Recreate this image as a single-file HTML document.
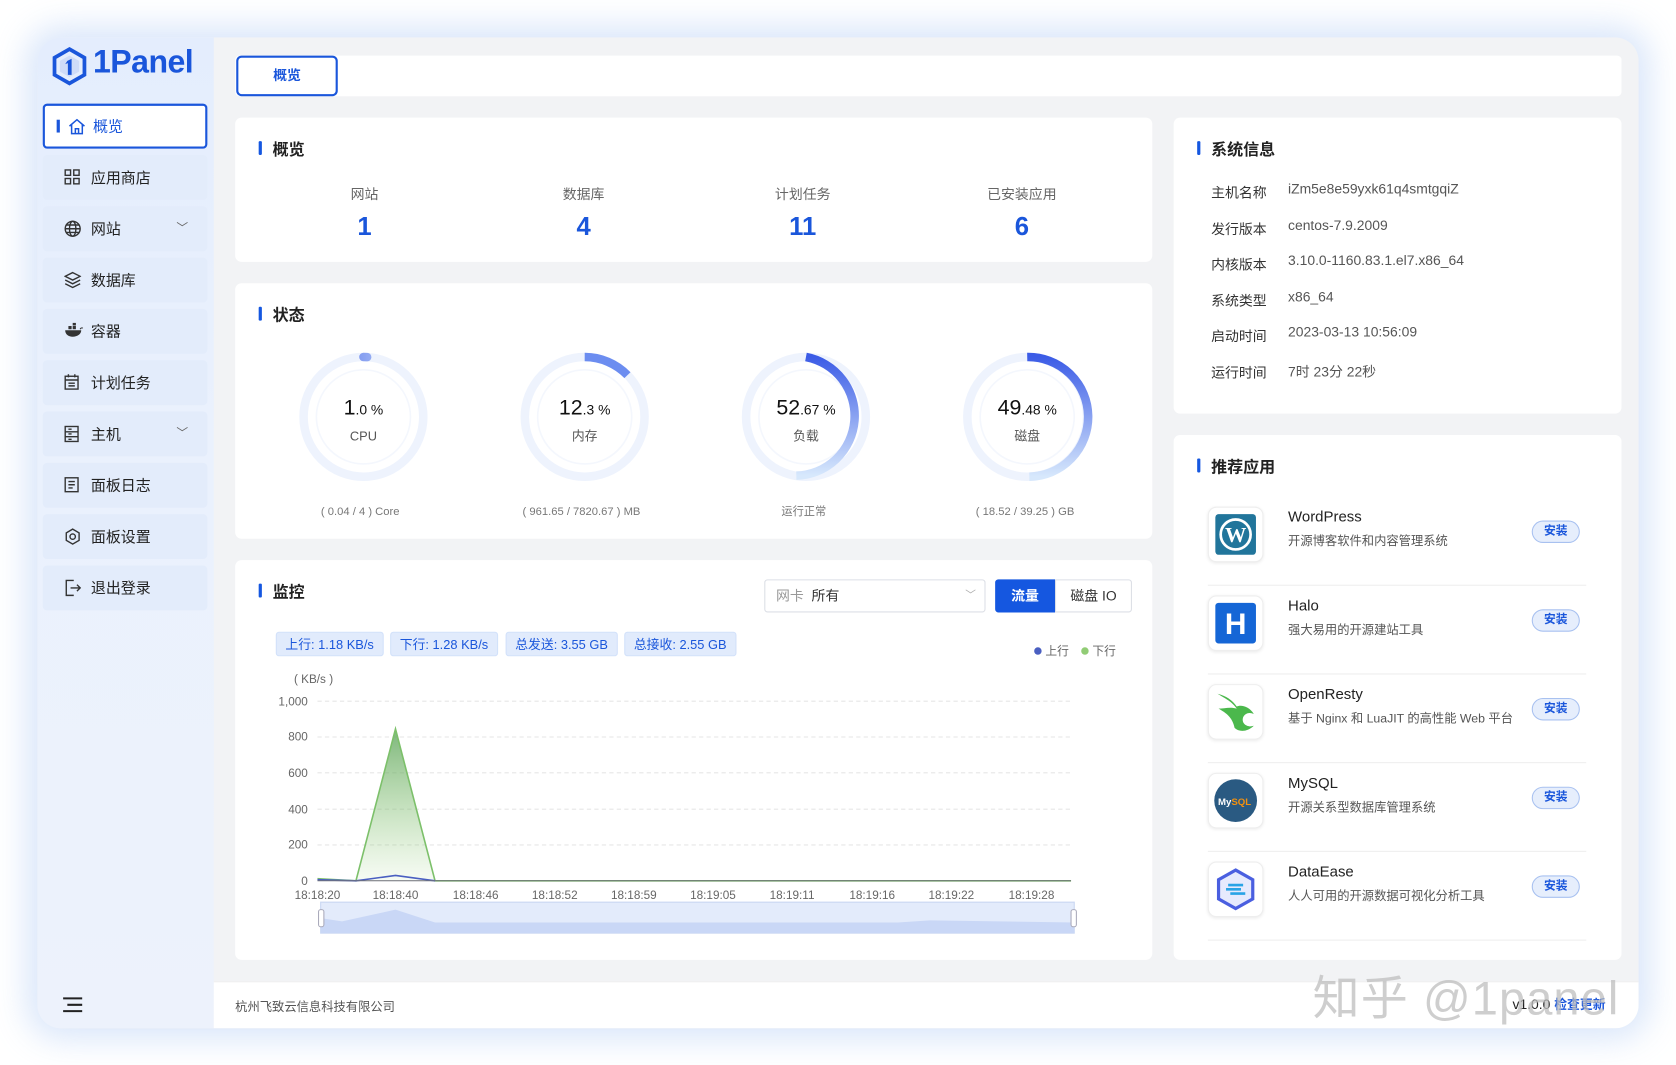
<!DOCTYPE html>
<html><head><meta charset="utf-8">
<style>
*{box-sizing:border-box;margin:0;padding:0}
html,body{width:1676px;height:1065px;overflow:hidden;background:#fff;font-family:"Liberation Sans","Noto Sans CJK SC",sans-serif}
#wrap{position:absolute;left:0;top:0;width:1568px;height:996px;transform:scale(1.0689);transform-origin:0 0;background:#fff}
.abs{position:absolute}
.win{left:35px;top:35px;width:1498px;height:927px;border-radius:22px;overflow:hidden;background:#f2f3f5;box-shadow:0 0 30px 10px rgba(170,200,245,.45)}
.side{left:0;top:0;width:165px;height:927px;background:linear-gradient(180deg,#e4edfd,#eaf1fd 40%,#edf2fc)}
.mi{position:absolute;left:5px;width:154px;height:42px;border-radius:4px;background:#e3ecfb;font-size:14px;color:#222;line-height:42px;padding-left:45px}
.mi svg{position:absolute;left:20px;top:13px}
.mi .ch{position:absolute;right:18px;top:0;font-size:11px;color:#666}
.card{position:absolute;background:#fff;border-radius:6px}
.ttl{position:absolute;left:23px;font-size:15px;font-weight:bold;color:#222}
.ttl:before{content:"";position:absolute;left:-1px;top:3px;width:3px;height:13px;background:#1557e0;border-radius:1px}
.ttl span{padding-left:12px}
.lbl{position:absolute;font-size:13px;color:#666;text-align:center;width:120px}
.num{position:absolute;font-size:24px;color:#1a56db;text-align:center;width:120px;font-weight:bold}
.si{position:absolute;font-size:13px;color:#333}
.sv{position:absolute;font-size:13px;color:#555}
.tag{position:absolute;top:591px;height:23px;line-height:23px;background:#e1ebfc;color:#1a56db;font-size:12px;padding:0 8px;border-radius:3px;border:1px solid #d2e1fa}
.app{position:absolute;left:32px;width:354px;height:83px;border-bottom:1px solid #eee}
.ico{position:absolute;left:0;top:9px;width:52px;height:52px;border-radius:8px;border:1px solid #eee;background:#fff;box-shadow:0 1px 3px rgba(0,0,0,.08)}
.an{position:absolute;left:75px;top:10px;font-size:14px;color:#222}
.ad{position:absolute;left:75px;top:33px;font-size:11.5px;color:#555}
.ib{position:absolute;left:303px;top:22px;width:45px;height:21px;border-radius:11px;background:#e6eefc;border:1px solid #a8c1f0;color:#1a56db;font-size:11px;text-align:center;line-height:19px;font-weight:bold}
</style></head><body><div id="wrap">
<div class="abs win">
 <div class="abs side">
  <svg class="abs" style="left:13px;top:9px" width="34" height="36" viewBox="0 0 34 36"><path d="M17 2 L31 10 L31 26 L17 34 L3 26 L3 10Z" fill="none" stroke="#1a56db" stroke-width="3.5"/><path d="M17 8 L26 13 L26 23 L17 28 L8 23 L8 13Z" fill="#cfdcf8"/><path d="M15 13 L19 11 L19 26 L15.5 26 L15.5 15 L13 16Z" fill="#1a56db"/></svg>
  <div class="abs" style="left:52px;top:7px;font-size:30px;font-weight:bold;color:#1a56db;letter-spacing:-0.5px">1Panel</div>
  <div class="mi" style="top:62px;background:#fff;border:2px solid #1a56db;color:#1a56db;line-height:38px"><span class="abs" style="left:11px;top:13px;width:3px;height:12px;background:#1a56db"></span><svg style="left:22px;top:12px" width="16" height="15" viewBox="0 0 16 15"><path d="M1 7 L8 1 L15 7 M3 5.5 V14 H13 V5.5 M6.5 14 V9.5 H9.5 V14" fill="none" stroke="#1a56db" stroke-width="1.4"/></svg>概览</div>
  <div class="mi" style="top:110px"><svg width="15" height="15" viewBox="0 0 15 15" fill="none" stroke="#333" stroke-width="1.3"><rect x="1" y="1" width="5" height="5"/><rect x="9" y="1" width="5" height="5"/><rect x="1" y="9" width="5" height="5"/><rect x="9" y="9" width="5" height="5"/></svg>应用商店</div>
  <div class="mi" style="top:158px"><svg width="16" height="16" viewBox="0 0 16 16" fill="none" stroke="#333" stroke-width="1.3"><circle cx="8" cy="8" r="7"/><ellipse cx="8" cy="8" rx="3" ry="7"/><path d="M1 8H15M2 4.5H14M2 11.5H14"/></svg>网站<span class="ch">﹀</span></div>
  <div class="mi" style="top:206px"><svg width="16" height="16" viewBox="0 0 16 16" fill="none" stroke="#333" stroke-width="1.3"><path d="M8 1 L15 4.5 L8 8 L1 4.5Z M1 8 L8 11.5 L15 8 M1 11.5 L8 15 L15 11.5"/></svg>数据库</div>
  <div class="mi" style="top:254px"><svg width="18" height="14" viewBox="0 0 18 14"><path d="M1 7 H16 C16 11 12 13 8 13 C4 13 1 11 1 7Z" fill="#333"/><rect x="4" y="3" width="3" height="3" fill="#333"/><rect x="8" y="3" width="3" height="3" fill="#333"/><rect x="8" y="0" width="3" height="2.5" fill="#333"/><path d="M15 6 C16 4 17.5 5 17.5 5" stroke="#333" fill="none"/></svg>容器</div>
  <div class="mi" style="top:302px"><svg width="14" height="15" viewBox="0 0 14 15" fill="none" stroke="#333" stroke-width="1.3"><rect x="1" y="2" width="12" height="12"/><path d="M1 5.5H13M4 0V3M10 0V3M4 8.5H10M4 11H10"/></svg>计划任务</div>
  <div class="mi" style="top:350px"><svg width="14" height="16" viewBox="0 0 14 16" fill="none" stroke="#333" stroke-width="1.3"><rect x="1" y="1" width="12" height="14"/><path d="M1 6H13M1 10.5H13M4 3.5H7M4 8H7M4 13H7"/></svg>主机<span class="ch">﹀</span></div>
  <div class="mi" style="top:398px"><svg width="14" height="15" viewBox="0 0 14 15" fill="none" stroke="#333" stroke-width="1.3"><rect x="1" y="1" width="12" height="13"/><path d="M4 4.5H10M4 7.5H10M4 10.5H8"/></svg>面板日志</div>
  <div class="mi" style="top:446px"><svg width="16" height="16" viewBox="0 0 16 16" fill="none" stroke="#333" stroke-width="1.3"><path d="M8 1 L14 4.5 V11.5 L8 15 L2 11.5 V4.5Z"/><circle cx="8" cy="8" r="2.5"/></svg>面板设置</div>
  <div class="mi" style="top:494px"><svg width="16" height="16" viewBox="0 0 16 16" fill="none" stroke="#333" stroke-width="1.3"><path d="M9 1H2V15H9M6 8H15M12 5L15 8L12 11"/></svg>退出登录</div>
  <svg class="abs" style="left:24px;top:898px" width="18" height="14" viewBox="0 0 18 14" stroke="#222" stroke-width="2"><path d="M0 1H18M4 7H18M0 13H18"/></svg>
 </div>
 <div class="abs" style="left:185px;top:17px;width:1297px;height:38px;background:#fff;border-radius:4px"></div>
 <div class="abs" style="left:186px;top:17px;width:95px;height:38px;background:#fff;border:2px solid #1a56db;border-radius:5px;color:#1a56db;font-size:13px;font-weight:bold;text-align:center;line-height:34px">概览</div>

 <div class="card" style="left:185px;top:75px;width:858px;height:135px">
  <div class="ttl" style="top:19px"><span>概览</span></div>
  <div class="lbl" style="left:61px;top:61px">网站</div><div class="num" style="left:61px;top:89px">1</div>
  <div class="lbl" style="left:266px;top:61px">数据库</div><div class="num" style="left:266px;top:89px">4</div>
  <div class="lbl" style="left:471px;top:61px">计划任务</div><div class="num" style="left:471px;top:89px">11</div>
  <div class="lbl" style="left:676px;top:61px">已安装应用</div><div class="num" style="left:676px;top:89px">6</div>
 </div>

 <div class="card" style="left:185px;top:230px;width:858px;height:239px">
  <div class="ttl" style="top:19px"><span>状态</span></div>
  <svg class="abs" style="left:0;top:0" width="858" height="239">
   <defs><linearGradient id="g" x1="0" y1="0" x2="0" y2="1"><stop offset="0" stop-color="#3c5ce6"/><stop offset="1" stop-color="#d7e8fc"/></linearGradient></defs>
   <g fill="none">
    <g transform="translate(120,125)"><circle r="56" stroke="#eef3fd" stroke-width="8"/><circle r="44" stroke="#f4f7fd" stroke-width="1.5"/><circle r="56" stroke="url(#g)" stroke-width="8" stroke-linecap="round" stroke-dasharray="3.5 400" transform="rotate(-90)"/></g>
    <g transform="translate(327,125)"><circle r="56" stroke="#eef3fd" stroke-width="8"/><circle r="44" stroke="#f4f7fd" stroke-width="1.5"/><path d="M0 -56 A56 56 0 0 1 40 -39" stroke="#6c8df0" stroke-width="8"/></g>
    <g transform="translate(534,125)"><circle r="56" stroke="#eef3fd" stroke-width="8"/><circle r="44" stroke="#f4f7fd" stroke-width="1.5"/><path d="M0 -56 A56 56 0 0 1 -9 55" stroke="url(#g)" stroke-width="8"/></g>
    <g transform="translate(741,125)"><circle r="56" stroke="#eef3fd" stroke-width="8"/><circle r="44" stroke="#f4f7fd" stroke-width="1.5"/><path d="M0 -56 A56 56 0 0 1 2 56" stroke="url(#g)" stroke-width="8"/></g>
   </g>
   <g font-family="Liberation Sans,Noto Sans CJK SC,sans-serif" text-anchor="middle">
    <text x="120" y="123" font-size="20" fill="#111">1<tspan font-size="13">.0 %</tspan></text>
    <text x="327" y="123" font-size="20" fill="#111">12<tspan font-size="13">.3 %</tspan></text>
    <text x="534" y="123" font-size="20" fill="#111">52<tspan font-size="13">.67 %</tspan></text>
    <text x="741" y="123" font-size="20" fill="#111">49<tspan font-size="13">.48 %</tspan></text>
    <g font-size="12" fill="#555"><text x="120" y="147">CPU</text><text x="327" y="147">内存</text><text x="534" y="147">负载</text><text x="741" y="147">磁盘</text></g>
    <g font-size="10.5" fill="#777"><text x="117" y="217">( 0.04 / 4 ) Core</text><text x="324" y="217">( 961.65 / 7820.67 ) MB</text><text x="532" y="217">运行正常</text><text x="739" y="217">( 18.52 / 39.25 ) GB</text></g>
   </g>
  </svg>
 </div>

 <div class="card" style="left:185px;top:489px;width:858px;height:374px">
  <div class="ttl" style="top:19px"><span>监控</span></div>
  <div class="abs" style="left:495px;top:18px;width:207px;height:31px;border:1px solid #dcdfe6;border-radius:3px;font-size:13px;line-height:29px;padding-left:10px;color:#999">网卡 <span style="color:#333">&nbsp;所有</span><span style="position:absolute;right:8px;font-size:10px;color:#aaa">﹀</span></div>
  <div class="abs" style="left:711px;top:18px;width:56px;height:31px;background:#1557e0;color:#fff;font-size:13px;font-weight:bold;line-height:31px;text-align:center;border-radius:3px 0 0 3px">流量</div>
  <div class="abs" style="left:767px;top:18px;width:72px;height:31px;border:1px solid #dcdfe6;color:#333;font-size:13px;line-height:29px;text-align:center;border-radius:0 3px 3px 0">磁盘 IO</div>
 </div>
 <div class="tag" style="left:223px;top:556px">上行: 1.18 KB/s</div>
 <div class="tag" style="left:330px;top:556px">下行: 1.28 KB/s</div>
 <div class="tag" style="left:438px;top:556px">总发送: 3.55 GB</div>
 <div class="tag" style="left:549px;top:556px">总接收: 2.55 GB</div>
 <svg class="abs" style="left:185px;top:454px" width="858" height="400">
  <g font-family="Liberation Sans,Noto Sans CJK SC,sans-serif" font-size="11" fill="#666">
   <circle cx="751" cy="120" r="3.5" fill="#4a5fc1"/><text x="758" y="124">上行</text>
   <circle cx="795" cy="120" r="3.5" fill="#91cc75"/><text x="802" y="124">下行</text>
   <text x="55" y="150">( KB/s )</text>
   <g text-anchor="end"><text x="68" y="171">1,000</text><text x="68" y="204">800</text><text x="68" y="238">600</text><text x="68" y="272">400</text><text x="68" y="305">200</text><text x="68" y="339">0</text></g>
   <g stroke="#e6e6e6" stroke-dasharray="4 3"><path d="M77 167H782M77 200.5H782M77 234H782M77 268H782M77 301.5H782"/></g>
   <g text-anchor="middle"><text x="77" y="352">18:18:20</text><text x="150" y="352">18:18:40</text><text x="225" y="352">18:18:46</text><text x="299" y="352">18:18:52</text><text x="373" y="352">18:18:59</text><text x="447" y="352">18:19:05</text><text x="521" y="352">18:19:11</text><text x="596" y="352">18:19:16</text><text x="670" y="352">18:19:22</text><text x="745" y="352">18:19:28</text></g>
  </g>
  <defs><linearGradient id="gg" x1="0" y1="0" x2="0" y2="1"><stop offset="0" stop-color="#5da45a" stop-opacity=".8"/><stop offset="1" stop-color="#91cc75" stop-opacity=".08"/></linearGradient></defs>
  <path d="M77 333L113 335L150 193L187 335L782 335V335H77Z" fill="url(#gg)"/>
  <path d="M77 333L113 335L150 193L187 335L782 335" fill="none" stroke="#7cc06a" stroke-width="1.5"/>
  <path d="M77 334L113 335L150 330L187 335" fill="none" stroke="#4a5fc1" stroke-width="1.5"/>
  <path d="M77 335H782" stroke="#6e7079"/>
  <rect x="80" y="355" width="705" height="29" fill="#e3ebfb" stroke="#c8d6f2"/>
  <path d="M80 370L100 373L150 362L187 374L620 374L650 372L785 374V384H80Z" fill="#c9d7f6"/>
  <rect x="78" y="362" width="5" height="16" rx="2" fill="#fff" stroke="#aab"/><rect x="782" y="362" width="5" height="16" rx="2" fill="#fff" stroke="#aab"/>
 </svg>

 <div class="card" style="left:1063px;top:75px;width:419px;height:277px">
  <div class="ttl" style="top:19px"><span>系统信息</span></div>
  <div class="si" style="left:35px;top:60px">主机名称</div><div class="sv" style="left:107px;top:59px">iZm5e8e59yxk61q4smtgqiZ</div>
  <div class="si" style="left:35px;top:94px">发行版本</div><div class="sv" style="left:107px;top:93px">centos-7.9.2009</div>
  <div class="si" style="left:35px;top:127px">内核版本</div><div class="sv" style="left:107px;top:126px">3.10.0-1160.83.1.el7.x86_64</div>
  <div class="si" style="left:35px;top:161px">系统类型</div><div class="sv" style="left:107px;top:160px">x86_64</div>
  <div class="si" style="left:35px;top:194px">启动时间</div><div class="sv" style="left:107px;top:193px">2023-03-13 10:56:09</div>
  <div class="si" style="left:35px;top:228px">运行时间</div><div class="sv" style="left:107px;top:227px">7时 23分 22秒</div>
 </div>

 <div class="card" style="left:1063px;top:372px;width:419px;height:491px">
  <div class="ttl" style="top:19px"><span>推荐应用</span></div>
  <div class="app" style="top:58px"><div class="ico"><svg width="50" height="50" viewBox="0 0 50 50"><rect x="6" y="6" width="38" height="38" rx="3" fill="#21759b"/><circle cx="25" cy="25" r="14" fill="none" stroke="#fff" stroke-width="2.5"/><text x="25" y="32" text-anchor="middle" font-size="20" font-weight="bold" fill="#fff" font-family="Liberation Serif,serif">W</text></svg></div><div class="an">WordPress</div><div class="ad">开源博客软件和内容管理系统</div><div class="ib">安装</div></div>
  <div class="app" style="top:141px"><div class="ico"><svg width="50" height="50" viewBox="0 0 50 50"><rect x="6" y="6" width="38" height="38" rx="3" fill="#1566d6"/><text x="25" y="35" text-anchor="middle" font-size="28" font-weight="bold" fill="#fff" font-family="Liberation Sans,sans-serif">H</text></svg></div><div class="an">Halo</div><div class="ad">强大易用的开源建站工具</div><div class="ib">安装</div></div>
  <div class="app" style="top:224px"><div class="ico"><svg width="50" height="50" viewBox="0 0 50 50"><path d="M8 8 C18 14 22 16 26 22 C20 20 14 22 9 22 C16 26 22 30 24 40 C28 44 36 44 42 38 C36 40 30 36 32 30 C34 26 38 25 42 27 C38 20 30 18 26 20 C22 14 16 10 8 8Z" fill="#4bb84c"/></svg></div><div class="an">OpenResty</div><div class="ad">基于 Nginx 和 LuaJIT 的高性能 Web 平台</div><div class="ib">安装</div></div>
  <div class="app" style="top:307px"><div class="ico"><svg width="50" height="50" viewBox="0 0 50 50"><circle cx="25" cy="25" r="20" fill="#2a5a82"/><text x="24" y="29" text-anchor="middle" font-size="9" font-weight="bold" fill="#fff" font-family="Liberation Sans,sans-serif">My<tspan fill="#f29111">SQL</tspan></text></svg></div><div class="an">MySQL</div><div class="ad">开源关系型数据库管理系统</div><div class="ib">安装</div></div>
  <div class="app" style="top:390px"><div class="ico"><svg width="50" height="50" viewBox="0 0 50 50"><path d="M25 7 L41 16 L41 34 L25 43 L9 34 L9 16Z" fill="#e6eafd" stroke="#4a5fe0" stroke-width="3"/><path d="M18 21H32M16 25H30M20 29H34" stroke="#29a3e6" stroke-width="2.5"/></svg></div><div class="an">DataEase</div><div class="ad">人人可用的开源数据可视化分析工具</div><div class="ib">安装</div></div>
 </div>

 <div class="abs" style="left:165px;top:883px;width:1333px;height:44px;background:#fff;border-top:1px solid #eee"></div>
 <div class="abs" style="left:185px;top:899px;font-size:11.5px;color:#555">杭州飞致云信息科技有限公司</div>
 <div class="abs" style="left:1380px;top:896px;font-size:13px;color:#222">v1.0.0 <span style="color:#1a56db;font-size:12px;font-weight:bold">检查更新</span></div>
</div>
<div class="abs" style="left:1228px;top:898px;font-size:44px;color:rgba(190,190,190,.75);letter-spacing:1px;white-space:nowrap">知乎 @1panel</div>
</div></body></html>
